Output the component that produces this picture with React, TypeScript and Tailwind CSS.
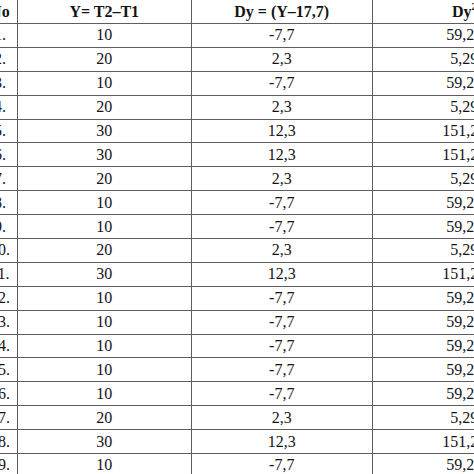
import React from "react";

interface Row {
  no: number;
  y: string;
}

const dyMap: { [key: string]: [string, string] } = {
  "10": ["-7,7", "59,29"],
  "20": ["2,3", "5,29"],
  "30": ["12,3", "151,29"],
};

const values = ["10", "20", "10", "20", "30", "30", "20", "10", "10", "20", "30", "10", "10", "10", "10", "10", "20", "30", "10"];

const rows: Row[] = values.map((y, i) => ({ no: i + 1, y }));

const cell = "flex items-center justify-center border-r-[1.5px] border-[#5e5e5e] shrink-0 whitespace-nowrap";

export default function App() {
  return (
    <div
      className="w-[474px] h-[474px] overflow-hidden bg-white text-[#141414] text-[16px]"
      style={{ fontFamily: '"Liberation Serif", "Times New Roman", serif' }}
    >
      <div className="ml-[-17px] w-[580px] flex flex-col">
        <div className="flex h-[24px] border-b-[1.5px] border-[#5e5e5e] font-bold">
          <div className={`${cell} w-[34.75px]`}>No</div>
          <div className={`${cell} w-[174px]`}>Y= T2–T1</div>
          <div className={`${cell} w-[181px]`}>Dy = (Y–17,7)</div>
          <div className={`${cell} w-[184px]`}>
            Dy<sup className="text-[10px]">2</sup>
          </div>
        </div>
        {rows.map((r) => (
          <div key={r.no} className="flex h-[23.9px] border-b-[1.5px] border-[#5e5e5e]">
            <div className={`${cell} w-[34.75px]`}>{r.no}.</div>
            <div className={`${cell} w-[174px]`}>{r.y}</div>
            <div className={`${cell} w-[181px]`}>{dyMap[r.y][0]}</div>
            <div className={`${cell} w-[184px]`}>{dyMap[r.y][1]}</div>
          </div>
        ))}
      </div>
    </div>
  );
}
